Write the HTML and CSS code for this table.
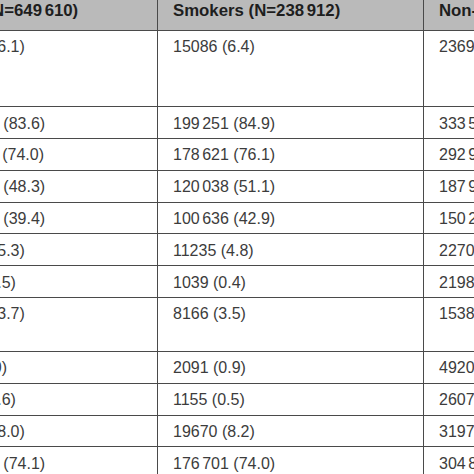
FILE: index.html
```html
<!DOCTYPE html>
<html>
<head>
<meta charset="utf-8">
<link rel="stylesheet" href="styles.css">
</head>
<body>
<div class="crop">
<table class="data">
  <colgroup>
    <col class="c-total">
    <col class="c-smk">
    <col class="c-non">
  </colgroup>
  <thead>
    <tr>
      <th>Total (N=649<span class="ts">&thinsp;</span>610)</th>
      <th>Smokers (N=238<span class="ts">&thinsp;</span>912)</th>
      <th>Non-smokers (N=410<span class="ts">&thinsp;</span>698)</th>
    </tr>
  </thead>
  <tbody>
    <tr class="tall3"><td>39626 (6.1)</td><td>15086 (6.4)</td><td>23690 (5.8)</td></tr>
    <tr><td>543<span class="ts">&thinsp;</span>073 (83.6)</td><td>199<span class="ts">&thinsp;</span>251 (84.9)</td><td>333<span class="ts">&thinsp;</span>598 (81.2)</td></tr>
    <tr><td>480<span class="ts">&thinsp;</span>711 (74.0)</td><td>178<span class="ts">&thinsp;</span>621 (76.1)</td><td>292<span class="ts">&thinsp;</span>935 (71.3)</td></tr>
    <tr><td>313<span class="ts">&thinsp;</span>762 (48.3)</td><td>120<span class="ts">&thinsp;</span>038 (51.1)</td><td>187<span class="ts">&thinsp;</span>974 (45.8)</td></tr>
    <tr><td>255<span class="ts">&thinsp;</span>946 (39.4)</td><td>100<span class="ts">&thinsp;</span>636 (42.9)</td><td>150<span class="ts">&thinsp;</span>266 (36.6)</td></tr>
    <tr><td>34429 (5.3)</td><td>11235 (4.8)</td><td>22708 (5.5)</td></tr>
    <tr><td>3237 (0.5)</td><td>1039 (0.4)</td><td>21980 (5.4)</td></tr>
    <tr class="tall2"><td>24035 (3.7)</td><td>8166 (3.5)</td><td>15388 (3.7)</td></tr>
    <tr><td>612 (1.0)</td><td>2091 (0.9)</td><td>4920 (1.2)</td></tr>
    <tr><td>3764 (0.6)</td><td>1155 (0.5)</td><td>2607 (0.6)</td></tr>
    <tr><td>51968 (8.0)</td><td>19670 (8.2)</td><td>31970 (7.8)</td></tr>
    <tr><td>481<span class="ts">&thinsp;</span>361 (74.1)</td><td>176<span class="ts">&thinsp;</span>701 (74.0)</td><td>304<span class="ts">&thinsp;</span>820 (74.2)</td></tr>
  </tbody>
</table>
</div>
</body>
</html>
```

FILE: styles.css
```css
html, body {
  margin: 0;
  padding: 0;
  background: #ffffff;
}

.crop {
  width: 474px;
  height: 474px;
  overflow: hidden;
}

.data {
  margin-left: -72px;
  margin-top: -6px;
  border-collapse: separate;
  border-spacing: 0;
  table-layout: fixed;
  width: 746px;
  font-family: "Liberation Sans", Arial, sans-serif;
  font-size: 16px;
  line-height: 19px;
}

.c-total { width: 230px; }
.c-smk { width: 266px; }
.c-non { width: 250px; }

.data th,
.data td {
  box-sizing: border-box;
  text-align: left;
  vertical-align: top;
  white-space: nowrap;
  overflow: hidden;
  padding: 6.3px 15px 5.5px 15px;
  border-bottom: 1px solid #4a4a4a;
  border-right: 1px solid #4a4a4a;
}

.ts {
  font-size: 12.5px;
  line-height: 0;
}

.data th {
  height: 37px;
  padding-top: 6.8px;
  background: #bababa;
  color: #1e1e1e;
  font-weight: bold;
  font-size: 16.8px;
}

.data th .ts {
  font-size: 13px;
}

.data td {
  height: 31.8px;
  color: #3c3c3c;
}

.data tr.tall3 td {
  height: 76.3px;
}

.data tr.tall2 td {
  height: 54px;
}
```
